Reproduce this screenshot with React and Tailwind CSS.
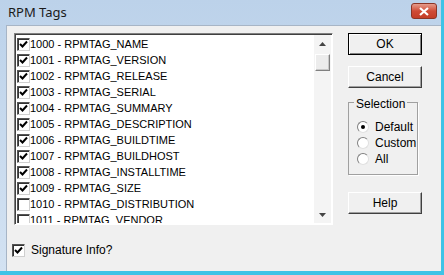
import React from 'react'

const tags = [
  ['1000', 'RPMTAG_NAME', true],
  ['1001', 'RPMTAG_VERSION', true],
  ['1002', 'RPMTAG_RELEASE', true],
  ['1003', 'RPMTAG_SERIAL', true],
  ['1004', 'RPMTAG_SUMMARY', true],
  ['1005', 'RPMTAG_DESCRIPTION', true],
  ['1006', 'RPMTAG_BUILDTIME', true],
  ['1007', 'RPMTAG_BUILDHOST', true],
  ['1008', 'RPMTAG_INSTALLTIME', true],
  ['1009', 'RPMTAG_SIZE', true],
  ['1010', 'RPMTAG_DISTRIBUTION', false],
  ['1011', 'RPMTAG_VENDOR', false],
]

function Check({ on }) {
  return (
    <span className="w-[13px] h-[13px] shrink-0 bg-white border border-t-[#555] border-l-[#555] border-r-[#cfcfcf] border-b-[#cfcfcf] shadow-[inset_1px_1px_#333] flex items-center justify-center">
      {on && (
        <svg width="9" height="9" viewBox="0 0 9 9">
          <path d="M1 4 L3.5 6.5 L8 1.5" stroke="#000" strokeWidth="2" fill="none" />
        </svg>
      )}
    </span>
  )
}

function Radio({ on, label }) {
  return (
    <div className="flex items-center gap-[6px] h-[15px]">
      <span className="w-[12px] h-[12px] rounded-full bg-white border border-t-[#808080] border-l-[#808080] border-r-[#e0e0e0] border-b-[#e0e0e0] flex items-center justify-center">
        {on && <span className="w-[4px] h-[4px] rounded-full bg-black" />}
      </span>
      <span>{label}</span>
    </div>
  )
}

function Btn({ children, def }) {
  return (
    <button
      className={[
        'w-[74px] h-[22px] bg-[#f0f0f0] text-[12px] text-black flex items-center justify-center',
        def
          ? 'border border-black shadow-[inset_1px_1px_#fff,inset_-1px_-1px_#808080]'
          : 'border border-t-white border-l-white border-r-[#404040] border-b-[#404040] shadow-[inset_-1px_-1px_#a0a0a0]',
      ].join(' ')}
    >
      {children}
    </button>
  )
}

export default function App() {
  return (
    <div
      className="w-[444px] h-[275px] flex flex-col bg-gradient-to-b from-[#bcd2ea] to-[#d3e2f2] border-r-[3px] border-b-[4px] border-[#3ec3e6] overflow-hidden"
      style={{ fontFamily: '"Liberation Sans", Arial, sans-serif' }}
    >
      {/* title bar */}
      <div className="h-[25px] shrink-0 flex items-center justify-between pl-[8px] pr-[4px]">
        <span className="text-[13px] text-[#1a1a1a]" style={{ fontFamily: '"Noto Sans", sans-serif' }}>RPM Tags</span>
        <span className="w-[26px] h-[16px] mb-[3px] rounded-[3px] bg-gradient-to-b from-[#e59b8b] via-[#cf4b36] to-[#c43d27] border border-[#8b3526] flex items-center justify-center">
          <svg width="10" height="9" viewBox="0 0 10 9">
            <path d="M1 1 L9 8 M9 1 L1 8" stroke="#fff" strokeWidth="2.2" />
          </svg>
        </span>
      </div>

      {/* body */}
      <div className="flex-1 ml-[6px] bg-[#f0f0f0] border-t border-l border-[#a7b5c6] flex flex-col text-[11px] text-black">
        <div className="flex pt-[7px] pl-[7px]">
          {/* list box */}
          <div className="w-[319px] h-[192px] border border-t-[#808080] border-l-[#808080] border-r-white border-b-white shadow-[inset_1px_1px_#404040] bg-white flex p-[1px]">
            <div className="flex-1 flex flex-col pl-[1px] pt-[1px] overflow-hidden">
              {tags.map(([n, name, on]) => (
                <div key={n} className="h-[16px] shrink-0 flex items-center gap-0 text-[11px]">
                  <Check on={on} />
                  <span className="whitespace-nowrap">{n} - {name}</span>
                </div>
              ))}
            </div>
            {/* scrollbar */}
            <div className="w-[17px] bg-[#f4f4f4] flex flex-col items-center">
              <div className="h-[17px] w-full flex items-center justify-center">
                <svg width="7" height="4" viewBox="0 0 7 4"><path d="M0 4 L3.5 0 L7 4 Z" fill="#444" /></svg>
              </div>
              <div className="w-[15px] h-[17px] mt-[2px] bg-[#ececec] border border-t-white border-l-white border-r-[#808080] border-b-[#808080] shadow-[inset_-1px_-1px_#c8c8c8]" />
              <div className="flex-1" />
              <div className="h-[17px] w-full flex items-center justify-center">
                <svg width="7" height="4" viewBox="0 0 7 4"><path d="M0 0 L3.5 4 L7 0 Z" fill="#444" /></svg>
              </div>
            </div>
          </div>

          {/* right column */}
          <div className="ml-[15px] flex flex-col text-[12px]">
            <Btn def>OK</Btn>
            <div className="mt-[11px]"><Btn>Cancel</Btn></div>
            <div className="mt-[14px] w-[70px] h-[73px] border border-[#a0a0a0] shadow-[1px_1px_#fff] relative pt-[16px] pl-[8px] flex flex-col gap-[1px]">
              <span className="absolute -top-[8px] left-[5px] px-[2px] bg-[#f0f0f0]">Selection</span>
              <Radio on label="Default" />
              <Radio label="Custom" />
              <Radio label="All" />
            </div>
            <div className="mt-[17px]"><Btn>Help</Btn></div>
          </div>
        </div>

        <div className="flex items-center gap-[6px] pl-[5px] mt-[16px] text-[12px]">
          <Check on />
          <span>Signature Info?</span>
        </div>
      </div>
    </div>
  )
}
